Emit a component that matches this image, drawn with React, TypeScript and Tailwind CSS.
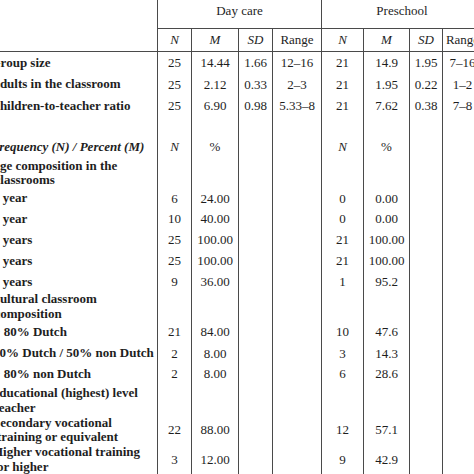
import React from "react";

type Row = {
  lines: string[];
  h: number;
  italic?: boolean;
  indent?: boolean;
  cells: string[]; // 8 values: day care N M SD Range, preschool N M SD Range
};

const COLS = [34, 47, 34, 49, 42, 46, 33, 40];

const ROWS: Row[] = [
  { lines: ["Group size"], h: 21.5, cells: ["25", "14.44", "1.66", "12–16", "21", "14.9", "1.95", "7–16"] },
  { lines: ["Adults in the classroom"], h: 21.5, cells: ["25", "2.12", "0.33", "2–3", "21", "1.95", "0.22", "1–2"] },
  { lines: ["Children-to-teacher ratio"], h: 21.5, cells: ["25", "6.90", "0.98", "5.33–8", "21", "7.62", "0.38", "7–8"] },
  { lines: [""], h: 20, cells: ["", "", "", "", "", "", "", ""] },
  { lines: ["Frequency (N) / Percent (M)"], h: 21, italic: true, cells: ["N", "%", "", "", "N", "%", "", ""] },
  { lines: ["Age composition in the", "classrooms"], h: 31, cells: ["", "", "", "", "", "", "", ""] },
  { lines: ["0 year"], h: 20, indent: true, cells: ["6", "24.00", "", "", "0", "0.00", "", ""] },
  { lines: ["1 year"], h: 21, indent: true, cells: ["10", "40.00", "", "", "0", "0.00", "", ""] },
  { lines: ["2 years"], h: 21, indent: true, cells: ["25", "100.00", "", "", "21", "100.00", "", ""] },
  { lines: ["3 years"], h: 21, indent: true, cells: ["25", "100.00", "", "", "21", "100.00", "", ""] },
  { lines: ["4 years"], h: 21, indent: true, cells: ["9", "36.00", "", "", "1", "95.2", "", ""] },
  { lines: ["Cultural classroom", "composition"], h: 28, cells: ["", "", "", "", "", "", "", ""] },
  { lines: ["> 80% Dutch"], h: 23, indent: true, cells: ["21", "84.00", "", "", "10", "47.6", "", ""] },
  { lines: ["50% Dutch / 50% non Dutch"], h: 20, indent: true, cells: ["2", "8.00", "", "", "3", "14.3", "", ""] },
  { lines: ["> 80% non Dutch"], h: 21, indent: true, cells: ["2", "8.00", "", "", "6", "28.6", "", ""] },
  { lines: ["Educational (highest) level", "teacher"], h: 32, cells: ["", "", "", "", "", "", "", ""] },
  { lines: ["Secondary vocational", "training or equivalent"], h: 27, indent: true, cells: ["22", "88.00", "", "", "12", "57.1", "", ""] },
  { lines: ["Higher vocational training", "or higher"], h: 32, indent: true, cells: ["3", "12.00", "", "", "9", "42.9", "", ""] },
];

function Label({ row }: { row: Row }) {
  return (
    <div
      className={
        "flex w-[167px] shrink-0 flex-col justify-center whitespace-nowrap font-bold leading-[14.5px] " +
        (row.indent ? "pl-[3px] " : "pl-[0.5px] ") +
        (row.italic ? "italic" : "")
      }
    >
      {row.lines.map((l, i) => (
        <span key={i} className={i > 0 ? "pl-[4px]" : ""}>
          {l}
        </span>
      ))}
    </div>
  );
}

export default function App() {
  return (
    <div className="h-[474px] w-[474px] overflow-hidden bg-white text-[13px] text-[#1e1e1e]" style={{ fontFamily: '"Liberation Serif", "Times New Roman", serif' }}>
      <div className="ml-[-10px] w-[500px]">
        {/* header: group titles */}
        <div className="flex h-[29px]">
          <div className="w-[167px] shrink-0" />
          <div className="flex w-[164px] shrink-0 justify-center border-b border-l border-[#4a4a4a] pt-px">
            Day care
          </div>
          <div className="flex w-[161px] shrink-0 justify-center border-b border-l border-[#4a4a4a] pt-px">
            Preschool
          </div>
        </div>
        {/* header: stats */}
        <div className="flex h-[23px] border-b border-[#4a4a4a]">
          <div className="w-[167px] shrink-0" />
          {["N", "M", "SD", "Range", "N", "M", "SD", "Range"].map((h, i) => (
            <div
              key={i}
              style={{ width: COLS[i] }}
              className={
                "flex shrink-0 items-center justify-center border-l border-[#4a4a4a] " +
                (h === "Range" ? "" : "italic")
              }
            >
              {h}
            </div>
          ))}
        </div>
        {/* body */}
        {ROWS.map((row, r) => (
          <div key={r} className="flex" style={{ height: row.h }}>
            <Label row={row} />
            {row.cells.map((c, i) => (
              <div
                key={i}
                style={{ width: COLS[i] }}
                className={
                  "flex shrink-0 items-center justify-center border-l border-[#4a4a4a] " +
                  (c === "N" ? "italic" : "")
                }
              >
                {c}
              </div>
            ))}
          </div>
        ))}
      </div>
    </div>
  );
}
